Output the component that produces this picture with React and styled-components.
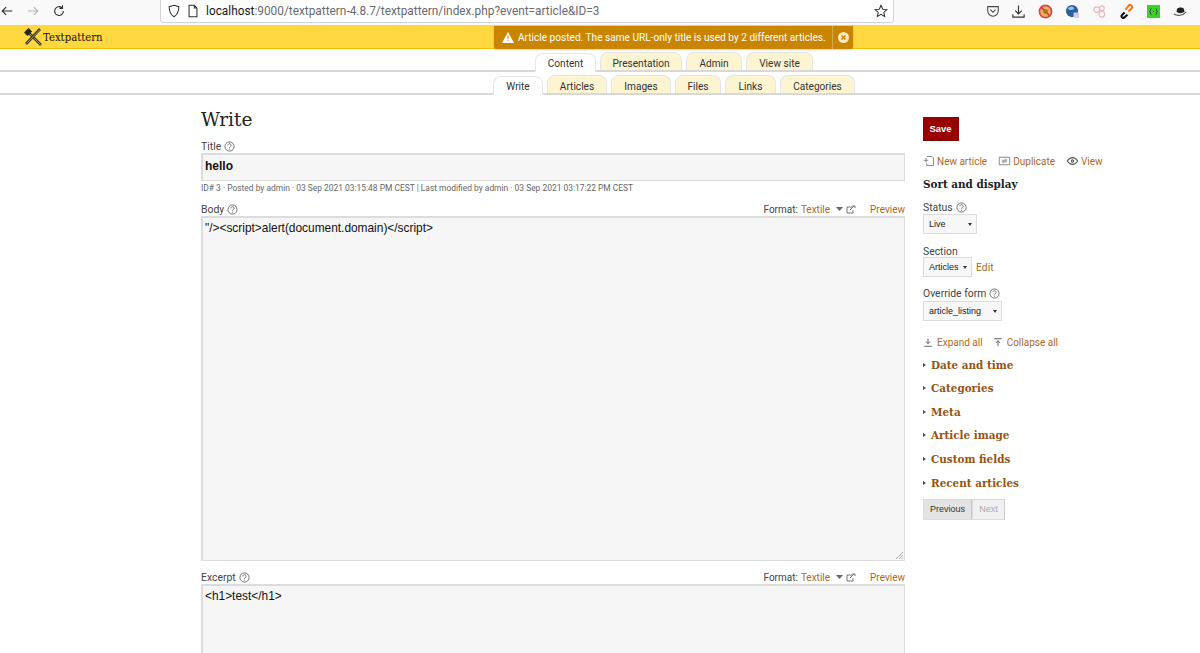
import React from 'react';
import styled, { createGlobalStyle } from 'styled-components';

const UI = '"Roboto", "Noto Sans", sans-serif';

const Global = createGlobalStyle`
  html, body { margin: 0; padding: 0; background: #fff; overflow: hidden; }
  body { font-family: ${UI}; font-size: 10.4px; color: #333; height: 653px; }
  * { box-sizing: border-box; }
`;

const Page = styled.div`width: 1200px; height: 653px; overflow: hidden; display: flex; flex-direction: column;`;

const BrowserBar = styled.div`
  height: 26px; flex: none; background: #f9f9fa; border-bottom: 1px solid #d0d0d4;
  display: flex; align-items: flex-start; position: relative;
`;
const NavButtons = styled.div`width: 160px; flex: none; height: 22px; padding-left: 0; display: flex; align-items: center; gap: 12px;`;
const UrlBox = styled.div`
  width: 734px; height: 23px; flex: none; background: #fff; border: 1px solid #d4d4d8; border-top: 0;
  border-radius: 0 0 4px 4px; display: flex; align-items: center; padding: 0 4px 0 6px; font-size: 11.85px;
  color: #6a6a70; white-space: nowrap;
`;
const Host = styled.span`color: #18181a;`;
const UrlText = styled.span`flex: 1; margin-left: 6px;`;
const Extensions = styled.div`margin-left: 92px; display: flex; align-items: center; height: 22px; gap: 11px;`;

const Header = styled.header`
  height: 23px; flex: none; background: #ffd83f; border-bottom: 1px solid #f6c200; position: relative;
  display: flex; align-items: center; padding-left: 23px;
`;
const Brand = styled.div`display: flex; align-items: center; font-family: "DejaVu Serif", serif; font-size: 10.1px; color: #111; gap: 0;`;
const Notice = styled.div`
  position: absolute; left: 494px; top: 0; width: 359px; height: 23px; background: #c98500; color: #fff;
  display: flex; align-items: center; font-size: 10.1px; border-radius: 0 0 3px 3px; box-shadow: 0 1px 2px rgba(0,0,0,.2);
`;
const NoticeText = styled.div`flex: 1; min-width: 0; display: flex; align-items: center; gap: 4px; padding-left: 8px; white-space: nowrap;`;
const NoticeClose = styled.div`width: 21px; flex: none; height: 100%; border-left: 1px solid #dca94a; display: flex; align-items: center; justify-content: center;`;

const TabRow = styled.nav`
  height: 23px; flex: none; display: flex; align-items: flex-end; gap: 4px; padding-left: ${p => p.$left}px;
  border-bottom: 2px solid #d8d8d8; background: #fff;
`;
const Tab = styled.div`
  height: ${p => p.$active ? 19 : 18}px; display: flex; align-items: center; justify-content: center;
  font-size: 10.1px; color: #333; background: ${p => p.$active ? '#fff' : '#fdf4d2'};
  border: 1px solid #e6e6e6; border-bottom: 0; border-radius: 8px 8px 0 0; white-space: nowrap;
  margin-bottom: ${p => p.$active ? -2 : 0}px; position: relative; padding-top: ${p => p.$active ? 1 : 4}px;
  width: ${p => p.$w}px;
`;

const Main = styled.main`display: grid; grid-template-columns: 704px 200px; column-gap: 18px; padding: 14px 0 0 201px; flex: 1; overflow: hidden;`;
const Column = styled.div`display: flex; flex-direction: column;`;
const Heading = styled.h1`margin: 0 0 8px; font: 400 18.5px/22px "DejaVu Serif", serif; color: #222;`;
const LabelRow = styled.div`display: flex; align-items: center; height: 14px; justify-content: space-between;`;
const Label = styled.label`display: flex; align-items: center; gap: 3px; color: #444;`;
const TitleInput = styled.div`
  height: 28px; background: #f6f6f6; border: 1px solid #dcdcdc; border-top-width: 2px; border-left-width: 2px;
  display: flex; align-items: center; padding: 0 2px 3px; font: 700 12px "Liberation Sans", sans-serif; color: #111;
`;
const Meta = styled.div`font-size: 8.44px; color: #666; margin: 2px 0 8px; line-height: 11px; height: 11px; white-space: nowrap;`;
const Textarea = styled.div`
  height: ${p => p.$h}px; background: #f6f6f6; border: 1px solid #dcdcdc; border-top-width: 2px; border-left-width: 2px;
  padding: 3px 2px; font: 400 11.9px/15px "Liberation Sans", sans-serif; color: #111; position: relative; flex: none;
`;
const Grip = styled.svg`position: absolute; right: 0; bottom: 0;`;
const Tools = styled.div`display: flex; align-items: center; color: #444; font-size: 10px;`;
const Link = styled.a`color: #ad6a1f; margin-left: ${p => p.$ml || 0}px;`;
const Spacer = styled.div`height: ${p => p.$h}px; flex: none;`;

const Side = styled.aside`display: flex; flex-direction: column; align-items: flex-start;`;
const SaveBtn = styled.button`
  width: 36px; height: 24px; margin: 8px 0 0; background: #990000; color: #fff; border: 0; border-bottom: 1px solid #7d0000; border-right: 1px solid #7d0000;
  font: 700 9.5px "Liberation Sans", sans-serif; padding: 0;
`;
const Actions = styled.div`display: flex; align-items: center; margin-top: ${p => p.$mt}px; height: 14px; font-size: 10px;`;
const Action = styled.a`display: flex; align-items: center; gap: ${p => p.$gap || 2}px; color: #ad6a1f; margin-right: ${p => p.$mr || 0}px; white-space: nowrap;`;
const SideTitle = styled.h3`margin: 8px 0 0; font: 700 10.4px/16px "DejaVu Serif", serif; color: #222;`;
const FieldLabel = styled.div`display: flex; align-items: center; gap: 3px; color: #444; height: 12px; margin-top: ${p => p.$mt}px;`;
const SelectRow = styled.div`display: flex; align-items: center; gap: 4px; margin-top: ${p => p.$mt}px;`;
const Select = styled.div`
  width: ${p => p.$w}px; height: 20px; background: #f7f7f7; border: 1px solid #dcdcdc; display: flex; align-items: center; justify-content: space-between;
  padding: 0 4px 0 5px; font: 400 9px "Liberation Sans", sans-serif; color: #222;
`;
const Caret = styled.span`width: 0; height: 0; border-left: 2.5px solid transparent; border-right: 2.5px solid transparent; border-top: 3px solid #333;`;
const Section = styled.div`display: flex; align-items: center; gap: 5px; height: 16px; font: 700 10.4px/16px "DejaVu Serif", serif; color: #95540f; margin-top: 7.6px; white-space: nowrap;`;
const SmallTri = styled.span`width: 0; height: 0; border-top: 2px solid transparent; border-bottom: 2px solid transparent; border-left: 3px solid #5a4a30; flex: none;`;
const Pager = styled.div`display: flex; margin-top: 8px;`;
const PageBtn = styled.div`
  height: 21px; width: ${p => p.$w}px; display: flex; align-items: center; justify-content: center; font: 400 9px "Liberation Sans", sans-serif;
  color: ${p => p.$off ? '#aaa' : '#333'}; background: ${p => p.$off ? '#f0f0f0' : '#e3e3e3'}; border: 1px solid #dcdcdc; border-right-color: #c9c9c9;
`;

const Help = () => (
  <svg width="11" height="11" viewBox="0 0 11 11" fill="none" stroke="#555" strokeWidth=".8">
    <circle cx="5.500" cy="5.500" r="4.600" />
    <path d="M3.900 4.300a1.600 1.600 0 1 1 2.500 1.300c-.6.400-.9.600-.9 1.300" />
    <path d="M5.500 7.700v1" />
  </svg>
);

const FormatTools = () => (
  <Tools>
    Format:<Link $ml={3}>Textile</Link>
    <svg width="10" height="8" viewBox="0 0 10 8" style={{ marginLeft: 5 }}><path d="M1 2h7L4.500 6z" fill="#666" /></svg>
    <svg width="10" height="9" viewBox="0 0 10 9" fill="none" stroke="#666" strokeWidth=".9" style={{ marginLeft: 1 }}><path d="M6 2H1v6h6V5M4 5l4-4M6 1h3v2" /></svg>
    <Link $ml={14}>Preview</Link>
  </Tools>
);

const Logo = () => (
  <svg width="20" height="20" viewBox="0 0 20 20">
    <path d="M4 4l14 14" stroke="#3a3320" strokeWidth="2.600" />
    <path d="M5 5l12.500 12.500" stroke="#b5a76a" strokeWidth=".9" />
    <path d="M17 2L3 17" stroke="#3a3320" strokeWidth="2.600" />
    <path d="M16.500 3L3.500 16.500" stroke="#b5a76a" strokeWidth=".9" />
    <path d="M1 5.500L5.500 1 9 4.500 4.500 9z" fill="#222" />
  </svg>
);

const Icon = ({ children, w = 16, h = 16, vb = '0 0 16 16', ...rest }) => (
  <svg width={w} height={h} viewBox={vb} fill="none" stroke="#333" strokeWidth="1.300" {...rest}>{children}</svg>
);

export default function App() {
  return (
    <Page>
      <Global />
      <BrowserBar>
        <NavButtons>
          <Icon w={14} h={14}><path d="M14 8H3M7 3.500L2.500 8 7 12.500" /></Icon>
          <Icon w={14} h={14} stroke="#b5b5b8"><path d="M2 8h11M9 3.500L13.500 8 9 12.500" /></Icon>
          <Icon w={14} h={14}><path d="M13 8a5 5 0 1 1-1.500-3.500M12 1.500v3.500H8.500" /></Icon>
        </NavButtons>
        <UrlBox>
          <Icon w={14} h={14} strokeWidth="1.200"><path d="M8 1.500l5.500 1.500c0 5-1.500 9-5.500 11.500C4 12 2.500 8 2.500 3z" /></Icon>
          <Icon w={14} h={14} strokeWidth="1.200" style={{ marginLeft: 5 }}><path d="M3.500 1.500h6l3 3v10h-9zM9.500 1.500v3h3" /></Icon>
          <UrlText><Host>localhost</Host>:9000/textpattern-4.8.7/textpattern/index.php?event=article&amp;ID=3</UrlText>
          <Icon w={14} h={14} strokeWidth="1.200" style={{ marginRight: 1 }}><path d="M8 1.500l2 4.400 4.700.5-3.500 3.200 1 4.700L8 11.900l-4.200 2.400 1-4.700L1.300 6.400 6 5.900z" /></Icon>
        </UrlBox>
        <Extensions>
          <Icon w={14} h={14} strokeWidth="1.200" stroke="#444"><path d="M2 3h12v5a6 6 0 0 1-12 0zM5 6.500l3 3 3-3" /></Icon>
          <Icon w={15} h={15} strokeWidth="1.200"><path d="M8 1.500v9M4.500 7L8 10.500 11.500 7M2 11v3h12v-3" /></Icon>
          <svg width="15" height="15" viewBox="0 0 16 16" style={{ marginLeft: 1 }}>
            <circle cx="8" cy="8" r="6.500" fill="#e9b060" stroke="#d24a4a" strokeWidth="1.800" />
            <path d="M3.500 3.500l9 9" stroke="#c33" strokeWidth="1.500" />
            <circle cx="8" cy="8" r="2.500" fill="#b76a1e" />
          </svg>
          <svg width="15" height="15" viewBox="0 0 16 16" style={{ marginLeft: 1 }}>
            <circle cx="7.500" cy="7.500" r="6.500" fill="#2a5f9e" />
            <path d="M3 5c2-3 6-3 7 0-2 2-5 2-7 0z" fill="#8fc1e8" />
            <rect x="9" y="9" width="6" height="6" rx="1.500" fill="#d9c8ee" />
          </svg>
          <svg width="15" height="15" viewBox="0 0 16 16" fill="none" stroke="#e8b7b7" strokeWidth="1.300" style={{ marginLeft: 1 }}>
            <circle cx="5" cy="6" r="3" /><circle cx="10.500" cy="4.500" r="2.500" /><circle cx="10.500" cy="11" r="3" />
          </svg>
          <svg width="15" height="15" viewBox="0 0 16 16" fill="none" strokeWidth="2.200" style={{ marginLeft: 1 }}>
            <path d="M6 9l-3 3a1.800 1.800 0 0 0 2.500 2.500L9 11.500" stroke="#111" />
            <path d="M7 6l3-4a2 2 0 0 1 3.500 2.500L10 8" stroke="#f27a1a" />
          </svg>
          <svg width="13" height="13" viewBox="0 0 13 13" style={{ marginLeft: 2 }}>
            <rect width="13" height="13" fill="#3fd126" />
            <path d="M4.500 3.500c-1 0-1 .5-1 1.500s-.5 1.500-1 1.500c.5 0 1 .5 1 1.500s0 1.500 1 1.500M8.500 3.500c1 0 1 .5 1 1.500s.5 1.500 1 1.500c-.5 0-1 .5-1 1.500s0 1.500-1 1.500M6 6.500h1" fill="none" stroke="#134" strokeWidth=".8" />
          </svg>
          <svg width="14" height="12" viewBox="0 0 14 12" style={{ marginLeft: 2 }}>
            <path d="M1 9c3 2 9 2 12-2" fill="none" stroke="#555" strokeWidth="1.200" />
            <path d="M4 4c1-2 6-2 7 0l.500 3c-3 1.500-6 1.500-8 0z" fill="#222" />
          </svg>
        </Extensions>
      </BrowserBar>

      <Header>
        <Brand><Logo />Textpattern</Brand>
        <Notice>
          <NoticeText>
            <svg width="12" height="11" viewBox="0 0 11 10"><path d="M5.500 0L11 10H0z" fill="#fff" /><path d="M5.500 3.500v3M5.500 7.500v1" stroke="#c98500" /></svg>
            Article posted. The same URL-only title is used by 2 different articles.
          </NoticeText>
          <NoticeClose>
            <svg width="11" height="11" viewBox="0 0 11 11"><circle cx="5.500" cy="5.500" r="5.500" fill="#fbe9c4" /><path d="M3.500 3.500l4 4M7.500 3.500l-4 4" stroke="#c98500" strokeWidth="1.500" /></svg>
          </NoticeClose>
        </Notice>
      </Header>

      <TabRow $left={535}>
        <Tab $active $w={61}>Content</Tab>
        <Tab $w={82}>Presentation</Tab>
        <Tab $w={56}>Admin</Tab>
        <Tab $w={67}>View site</Tab>
      </TabRow>
      <TabRow $left={493}>
        <Tab $active $w={50}>Write</Tab>
        <Tab $w={60}>Articles</Tab>
        <Tab $w={60}>Images</Tab>
        <Tab $w={46}>Files</Tab>
        <Tab $w={51}>Links</Tab>
        <Tab $w={75}>Categories</Tab>
      </TabRow>

      <Main>
        <Column>
          <Heading>Write</Heading>
          <LabelRow><Label>Title <Help /></Label></LabelRow>
          <TitleInput>hello</TitleInput>
          <Meta>ID# 3 · Posted by admin · 03 Sep 2021 03:15:48 PM CEST | Last modified by admin · 03 Sep 2021 03:17:22 PM CEST</Meta>
          <LabelRow><Label>Body <Help /></Label><FormatTools /></LabelRow>
          <Textarea $h={345}>
            "/&gt;&lt;script&gt;alert(document.domain)&lt;/script&gt;
            <Grip width="9" height="9" viewBox="0 0 9 9" stroke="#999" strokeWidth=".8"><path d="M8 1L1 8M8 4L4 8M8 6.500L6.500 8" /></Grip>
          </Textarea>
          <Spacer $h={9} />
          <LabelRow><Label>Excerpt <Help /></Label><FormatTools /></LabelRow>
          <Textarea $h={120}>&lt;h1&gt;test&lt;/h1&gt;</Textarea>
        </Column>
        <Side>
          <SaveBtn>Save</SaveBtn>
          <Actions $mt={13}>
            <Action $mr={11}>
              <Icon w={12} h={12} stroke="#666" strokeWidth="1"><path d="M5 2h7l2 2v10H5v-3M1 7h6M4 4v6" /></Icon>New article
            </Action>
            <Action $mr={11}>
              <Icon w={13} h={12} stroke="#666" strokeWidth="1"><path d="M1 3h14v10H1zM5 7h6l-2-2M11 9H5l2 2" /></Icon>Duplicate
            </Action>
            <Action>
              <Icon w={13} h={12} stroke="#555" strokeWidth="1.400"><path d="M1 8s3-4.500 7-4.500S15 8 15 8s-3 4.500-7 4.500S1 8 1 8z" /><circle cx="8" cy="8" r="1.500" /></Icon>View
            </Action>
          </Actions>
          <SideTitle>Sort and display</SideTitle>
          <FieldLabel $mt={9}>Status <Help /></FieldLabel>
          <SelectRow $mt={1}><Select $w={54}>Live <Caret /></Select></SelectRow>
          <FieldLabel $mt={11}>Section</FieldLabel>
          <SelectRow $mt={0}><Select $w={49}>Articles <Caret /></Select><Link>Edit</Link></SelectRow>
          <FieldLabel $mt={10}>Override form <Help /></FieldLabel>
          <SelectRow $mt={2}><Select $w={79}>article_listing <Caret /></Select></SelectRow>
          <Actions $mt={14}>
            <Action $mr={10} $gap={4}>
              <Icon w={10} h={11} stroke="#555" strokeWidth="1.500"><path d="M8 2v7M5 6.500L8 10l3-3.500M2 14h12" /></Icon>Expand all
            </Action>
            <Action $gap={4}>
              <Icon w={10} h={11} stroke="#555" strokeWidth="1.500"><path d="M2 2h12M8 14V6M5 8.500L8 5l3 3.500" /></Icon>Collapse all
            </Action>
          </Actions>
          <Section><SmallTri />Date and time</Section>
          <Section><SmallTri />Categories</Section>
          <Section><SmallTri />Meta</Section>
          <Section><SmallTri />Article image</Section>
          <Section><SmallTri />Custom fields</Section>
          <Section><SmallTri />Recent articles</Section>
          <Pager><PageBtn $w={49}>Previous</PageBtn><PageBtn $w={33} $off>Next</PageBtn></Pager>
        </Side>
      </Main>
    </Page>
  );
}
